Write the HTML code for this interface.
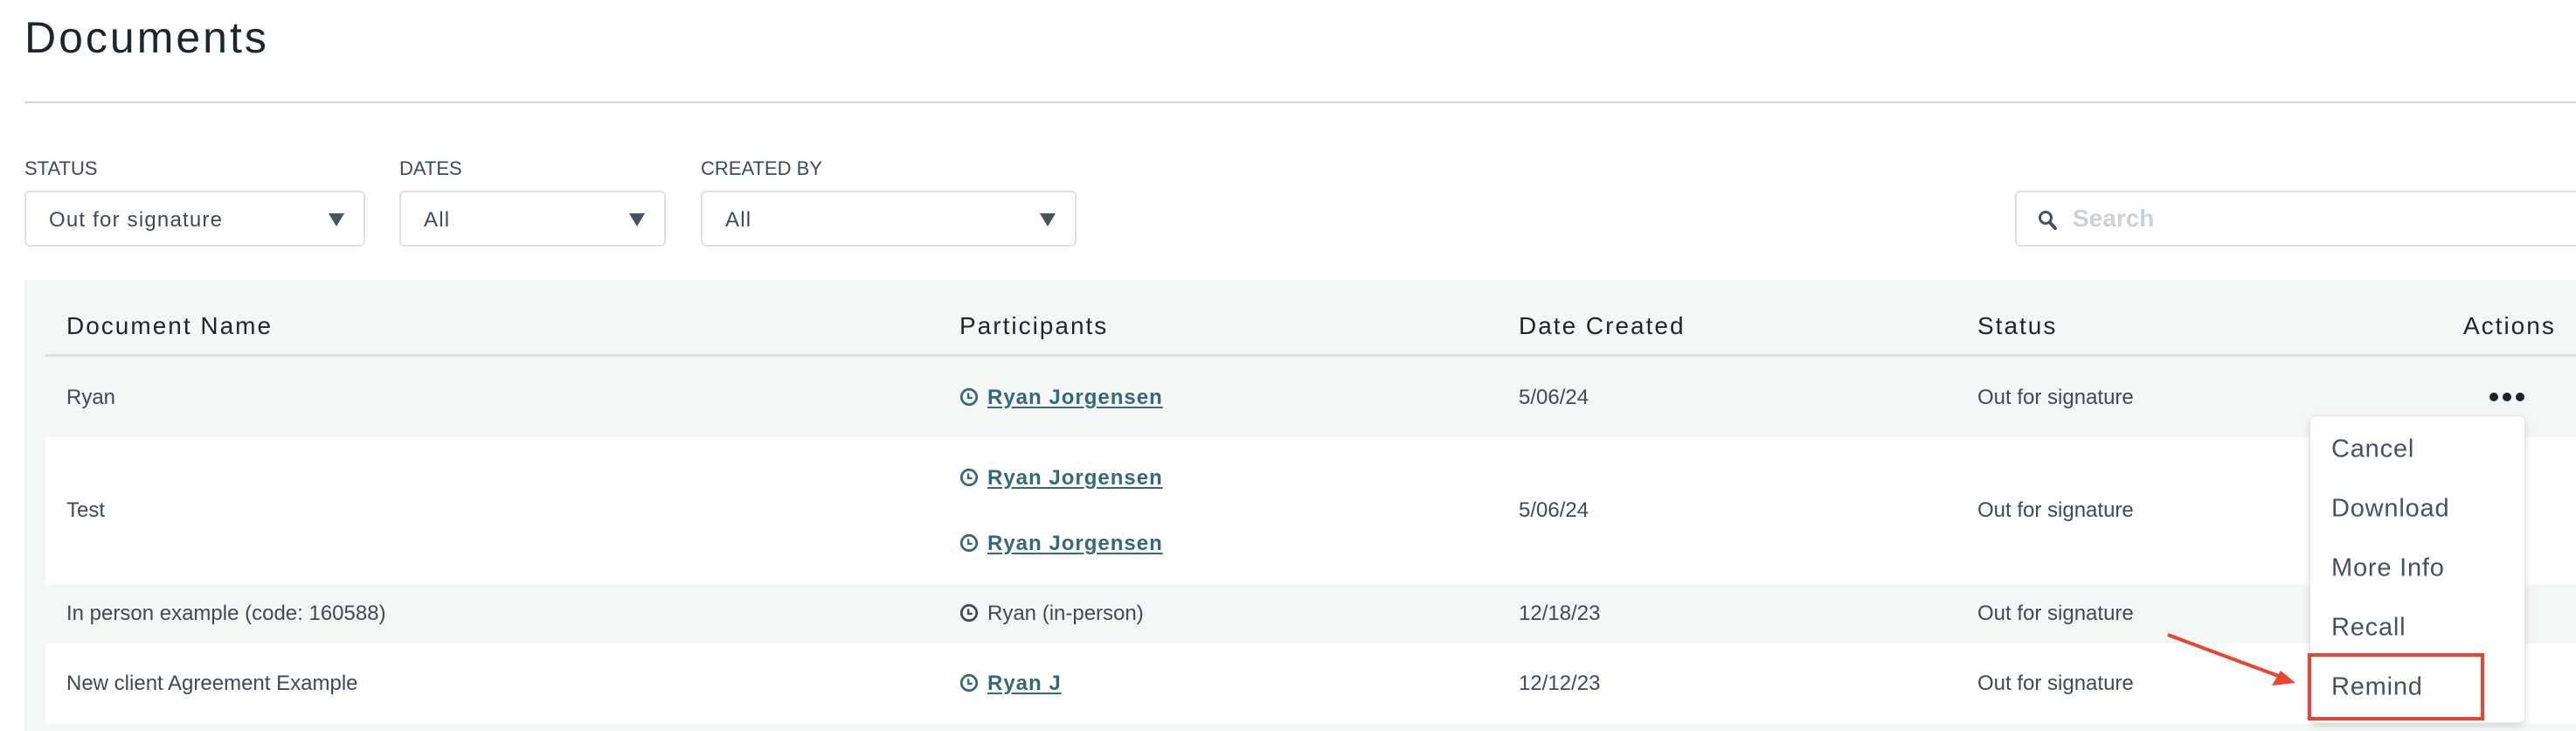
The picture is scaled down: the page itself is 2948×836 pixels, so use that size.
<!DOCTYPE html>
<html><head><meta charset="utf-8"><style>
*{margin:0;padding:0;box-sizing:border-box}
body{width:2948px;height:836px;overflow:hidden;background:#fff;font-family:"Liberation Sans",sans-serif;position:relative;color:#3f4a54}
.a{position:absolute;white-space:nowrap}
.sel{position:absolute;top:218px;height:64px;border:2px solid #dde2e5;border-radius:6px;background:#fff}
.sel span{position:absolute;left:26px;top:18px;font-size:24px;color:#3f4a54;letter-spacing:1.2px}
.sel i{position:absolute;right:22px;top:24px;width:0;height:0;border-left:9px solid transparent;border-right:9px solid transparent;border-top:15px solid #46525c}
.lbl{position:absolute;top:180px;font-size:22px;color:#3f4a54}
.h{position:absolute;top:357px;font-size:28px;color:#1e252b;letter-spacing:2px}
.t{position:absolute;font-size:24px;color:#3f4a54;white-space:nowrap;transform:translateY(-50%)}
.lk{color:#33697a;font-weight:bold;text-decoration:underline;text-underline-offset:3px;letter-spacing:1px}
.ic{display:inline-block;vertical-align:-3px;margin-right:10px}
.mi{position:absolute;left:2668px;font-size:29px;color:#46525c;transform:translateY(-50%);letter-spacing:0.8px}
</style></head><body>
<div class="a" style="left:28px;top:14px;font-size:50px;color:#1e252b;letter-spacing:3px">Documents</div>
<div class="a" style="left:28px;top:116px;width:2920px;height:2px;background:#d4d6d8"></div>
<div class="lbl" style="left:28px">STATUS</div>
<div class="lbl" style="left:457px">DATES</div>
<div class="lbl" style="left:802px">CREATED BY</div>
<div class="sel" style="left:28px;width:390px"><span>Out for signature</span><i></i></div>
<div class="sel" style="left:457px;width:305px"><span>All</span><i></i></div>
<div class="sel" style="left:802px;width:430px"><span>All</span><i></i></div>
<div class="sel" style="left:2306px;width:700px"><svg style="position:absolute;left:24px;top:20px" width="24" height="26" viewBox="0 0 24 26"><circle cx="9" cy="9" r="6.5" fill="none" stroke="#46525c" stroke-width="3"/><path d="M13.5 14L20 21" stroke="#46525c" stroke-width="4" stroke-linecap="round"/></svg><span style="left:64px;top:14px;font-size:28px;font-weight:bold;color:#cdd1d5;letter-spacing:0">Search</span></div>
<div class="a" style="left:28px;top:320px;width:2920px;height:516px;background:#f5f7f7"></div>
<div class="h" style="left:76px">Document Name</div>
<div class="h" style="left:1098px">Participants</div>
<div class="h" style="left:1738px">Date Created</div>
<div class="h" style="left:2263px">Status</div>
<div class="h" style="left:2819px">Actions</div>
<div class="a" style="left:52px;top:405px;width:2896px;height:3px;background:#dbe1e4"></div>
<div class="a" style="left:52px;top:500px;width:2896px;height:168px;background:#fff"></div>
<div class="a" style="left:52px;top:736px;width:2896px;height:92px;background:#fff"></div>
<svg width="0" height="0" style="position:absolute"><defs><symbol id="clk" viewBox="0 0 24 24"><circle cx="12" cy="12" r="9.5" fill="none" stroke="currentColor" stroke-width="3"/><path d="M11 7v6h5" fill="none" stroke="currentColor" stroke-width="2.5"/></symbol></defs></svg>
<div class="t" style="left:76px;top:455px">Ryan</div>
<div class="t lk" style="left:1098px;top:455px"><svg class="ic" width="22" height="22"><use href="#clk"/></svg>Ryan Jorgensen</div>
<div class="t" style="left:1738px;top:455px">5/06/24</div>
<div class="t" style="left:2263px;top:455px">Out for signature</div>
<div class="t" style="left:76px;top:584px">Test</div>
<div class="t lk" style="left:1098px;top:547px"><svg class="ic" width="22" height="22"><use href="#clk"/></svg>Ryan Jorgensen</div>
<div class="t lk" style="left:1098px;top:622px"><svg class="ic" width="22" height="22"><use href="#clk"/></svg>Ryan Jorgensen</div>
<div class="t" style="left:1738px;top:584px">5/06/24</div>
<div class="t" style="left:2263px;top:584px">Out for signature</div>
<div class="t" style="left:76px;top:702px">In person example (code: 160588)</div>
<div class="t" style="left:1098px;top:702px;color:#3f4a54"><svg class="ic" width="22" height="22"><use href="#clk"/></svg>Ryan (in-person)</div>
<div class="t" style="left:1738px;top:702px">12/18/23</div>
<div class="t" style="left:2263px;top:702px">Out for signature</div>
<div class="t" style="left:76px;top:782px">New client Agreement Example</div>
<div class="t lk" style="left:1098px;top:782px"><svg class="ic" width="22" height="22"><use href="#clk"/></svg>Ryan J</div>
<div class="t" style="left:1738px;top:782px">12/12/23</div>
<div class="t" style="left:2263px;top:782px">Out for signature</div>
<svg class="a" style="left:2848px;top:447px" width="44" height="14"><circle cx="6" cy="7" r="5" fill="#1e252b"/><circle cx="21" cy="7" r="5" fill="#1e252b"/><circle cx="36" cy="7" r="5" fill="#1e252b"/></svg>
<div class="a" style="left:2643px;top:475px;width:247px;height:352px;background:#fff;border:1px solid #e2e6e8;border-radius:7px;box-shadow:0 3px 8px rgba(0,0,0,0.15)"></div>
<div class="mi" style="top:514px">Cancel</div>
<div class="mi" style="top:582px">Download</div>
<div class="mi" style="top:650px">More Info</div>
<div class="mi" style="top:718px">Recall</div>
<div class="mi" style="top:786px">Remind</div>
<div class="a" style="left:2641px;top:747px;width:202px;height:77px;border:4px solid #e8452c"></div>
<svg class="a" style="left:2470px;top:715px" width="170" height="80"><path d="M11 11L140 59" stroke="#e8452c" stroke-width="4"/><path d="M157 66L130 69L140 52Z" fill="#e8452c"/></svg>
</body></html>
